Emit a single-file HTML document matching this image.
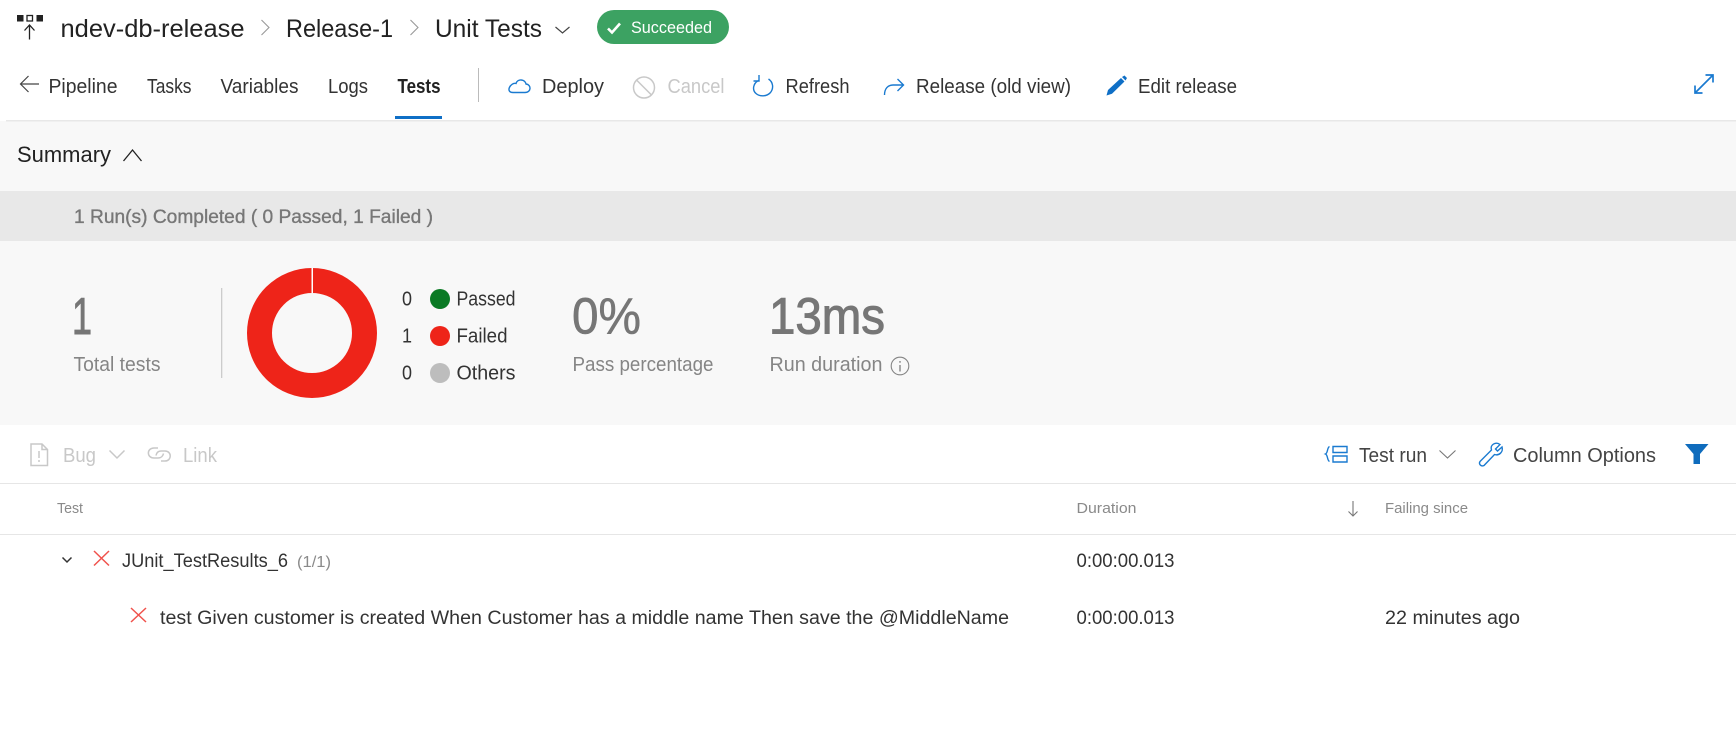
<!DOCTYPE html>
<html lang="en"><head><meta charset="utf-8"><title>Unit Tests</title>
<style>
html,body{margin:0;padding:0;background:#fff;width:1736px;height:734px;overflow:hidden}
svg{display:block}
text{font-family:"Liberation Sans",Arial,sans-serif;fill:#333}
.i{fill:none;stroke:#1a7ad0;stroke-width:1.4}
.g{fill:none;stroke:#c8c8c8;stroke-width:1.5}
.k{fill:none;stroke:#444;stroke-width:1.2}
</style></head><body>
<svg xmlns="http://www.w3.org/2000/svg" width="1736" height="734" viewBox="0 0 1736 734">
<rect width="1736" height="734" fill="#fff"/>
<!-- header -->
<g fill="#222"><rect x="17" y="15" width="6.500" height="6.500"/><rect x="36.500" y="15" width="6.500" height="6.500"/></g>
<rect x="27" y="15.500" width="5.500" height="5.500" fill="none" stroke="#222" stroke-width="1.300"/>
<path d="M29.500 26V39.500M24.500 30.500L29.500 25L34.500 30.500" fill="none" stroke="#222" stroke-width="1.300"/>
<g font-size="25">
<text x="60.500" y="37" textLength="184" lengthAdjust="spacingAndGlyphs" style="fill:#222">ndev-db-release</text>
<text x="286" y="37" textLength="107" lengthAdjust="spacingAndGlyphs" style="fill:#222">Release-1</text>
<text x="435" y="37" textLength="107" lengthAdjust="spacingAndGlyphs" style="fill:#222">Unit Tests</text>
</g>
<path d="M261.500 20L269 27.500L261.500 35M410.500 20L418 27.500L410.500 35" fill="none" stroke="#999" stroke-width="1.100"/>
<path d="M555.500 27L562.500 33L569.500 27" class="k"/>
<rect x="597" y="10" width="132" height="34" rx="17" fill="#3ca262"/>
<path d="M608 28.500L612 32.500L620 23.500" fill="none" stroke="#fff" stroke-width="2.600"/>
<text x="631" y="33" font-size="16.500" textLength="81" lengthAdjust="spacingAndGlyphs" style="fill:#fff">Succeeded</text>
<!-- nav -->
<path d="M39 84H21M28.500 76L20.500 84L28.500 92" fill="none" stroke="#444" stroke-width="1.200"/>
<g font-size="20">
<text x="48.500" y="93" textLength="69" lengthAdjust="spacingAndGlyphs">Pipeline</text>
<text x="147" y="93" textLength="44.500" lengthAdjust="spacingAndGlyphs">Tasks</text>
<text x="220.500" y="93" textLength="78" lengthAdjust="spacingAndGlyphs">Variables</text>
<text x="328" y="93" textLength="40" lengthAdjust="spacingAndGlyphs">Logs</text>
<text x="397.500" y="93" textLength="43" lengthAdjust="spacingAndGlyphs" font-weight="700" style="fill:#222">Tests</text>
<text x="542" y="93" textLength="62" lengthAdjust="spacingAndGlyphs">Deploy</text>
<text x="667.500" y="93" textLength="57" lengthAdjust="spacingAndGlyphs" style="fill:#c8c8c8">Cancel</text>
<text x="785.500" y="93" textLength="64" lengthAdjust="spacingAndGlyphs">Refresh</text>
<text x="916" y="93" textLength="155" lengthAdjust="spacingAndGlyphs">Release (old view)</text>
<text x="1138" y="93" textLength="99" lengthAdjust="spacingAndGlyphs">Edit release</text>
</g>
<rect x="395" y="116" width="47" height="3" fill="#0f6fc6"/>
<rect x="478" y="68" width="1" height="34" fill="#bbb"/>
<path class="i" d="M513 92.500H525C531.500 92.500 531.500 84.500 526 84C525 79 517.500 78.500 516 83.500C510.500 82 505 92.500 513 92.500Z"/>
<circle cx="644" cy="87.500" r="10.500" class="g"/><path class="g" d="M636.500 80L651.500 95"/>
<path class="i" d="M758.500 80.500C753 83.500 752 90 756 93.500C760 97 767 96.500 770.500 92.500C774 88 773 82 768.500 79M759 75V81H753.500"/>
<path class="i" d="M903 85H893C888 85 884.500 88.500 884.500 95M897.500 79L903.500 85L897.500 91"/>
<path d="M1106.500 95.500L1108 90L1121 78L1124.500 81.500L1112 93.800ZM1122 77L1124.500 75.500L1127 78L1125.500 80.500Z" fill="#0f6fc6"/>
<path d="M1695.500 92.500L1712.500 75.500M1705.500 75H1713V82.500M1695 85.500V93H1702.500" fill="none" stroke="#1a7ad0" stroke-width="1.700"/>
<!-- summary -->
<rect x="0" y="121" width="1736" height="304" fill="#f8f8f8"/>
<rect x="6" y="120" width="1730" height="1.500" fill="#e8e8e8"/>
<text x="17" y="162" font-size="22" textLength="94" lengthAdjust="spacingAndGlyphs" style="fill:#222">Summary</text>
<path d="M123.500 161L132.500 150L141.500 161" fill="none" stroke="#222" stroke-width="1.300"/>
<rect x="0" y="191" width="1736" height="50" fill="#e8e8e8"/>
<text x="74" y="223" font-size="19" textLength="359" lengthAdjust="spacingAndGlyphs" style="fill:#777;stroke:#777;stroke-width:.35">1 Run(s) Completed ( 0 Passed, 1 Failed )</text>
<text x="72" y="334" font-size="52" textLength="20" lengthAdjust="spacingAndGlyphs" style="fill:#767676;stroke:#767676;stroke-width:1">1</text>
<text x="73.500" y="371" font-size="20" textLength="87" lengthAdjust="spacingAndGlyphs" style="fill:#858585">Total tests</text>
<rect x="221" y="288" width="1.300" height="90" fill="#ccc"/>
<circle cx="312" cy="333" r="52.500" fill="none" stroke="#ee2419" stroke-width="25"/>
<rect x="311.500" y="268" width="1.500" height="25" fill="#fff"/>
<g font-size="20">
<text x="402" y="305.500" textLength="10" lengthAdjust="spacingAndGlyphs">0</text>
<text x="402" y="342.500" textLength="10" lengthAdjust="spacingAndGlyphs">1</text>
<text x="402" y="379.500" textLength="10" lengthAdjust="spacingAndGlyphs">0</text>
<text x="456.500" y="305.500" textLength="59" lengthAdjust="spacingAndGlyphs">Passed</text>
<text x="456.500" y="342.500" textLength="51" lengthAdjust="spacingAndGlyphs">Failed</text>
<text x="456.500" y="379.500" textLength="59" lengthAdjust="spacingAndGlyphs">Others</text>
</g>
<circle cx="440" cy="299" r="10" fill="#0a7a24"/>
<circle cx="440" cy="336" r="10" fill="#ee2419"/>
<circle cx="440" cy="373" r="10" fill="#bdbdbd"/>
<text x="572" y="333.500" font-size="51" textLength="69" lengthAdjust="spacingAndGlyphs" style="fill:#767676;stroke:#767676;stroke-width:.6">0%</text>
<text x="769" y="333.500" font-size="51" textLength="116" lengthAdjust="spacingAndGlyphs" style="fill:#767676;stroke:#767676;stroke-width:1">13ms</text>
<text x="572.500" y="371" font-size="20" textLength="141" lengthAdjust="spacingAndGlyphs" style="fill:#858585">Pass percentage</text>
<text x="769.500" y="371" font-size="20" textLength="113" lengthAdjust="spacingAndGlyphs" style="fill:#858585">Run duration</text>
<circle cx="900" cy="366" r="8.800" fill="none" stroke="#858585" stroke-width="1.100"/>
<path d="M900 365V371.500M900 361V362.800" stroke="#858585" stroke-width="1.400"/>
<!-- toolbar -->
<path class="g" d="M31 444H42L47.500 449.500V465.500H31ZM42 444V449.500H47.500"/>
<path d="M39 451V458M39 460V462" stroke="#c8c8c8" stroke-width="1.500"/>
<text x="63" y="462" font-size="20" textLength="33" lengthAdjust="spacingAndGlyphs" style="fill:#c8c8c8">Bug</text>
<path class="g" d="M109.500 450.500L117 458L124.500 450.500"/>
<path class="g" d="M158 448H154C146.500 448 146.500 458 154 458H158C161 458 163 456 163.500 453.500M161 461H165C172 461 172 451 165 451H161C158 451 156.500 453 156 455.500"/>
<text x="183" y="462" font-size="20" textLength="34" lengthAdjust="spacingAndGlyphs" style="fill:#c8c8c8">Link</text>
<path class="i" d="M1333 446.500H1347V452.500H1333ZM1333 456H1347V462H1333ZM1329.500 446.500C1327 447.500 1328 453 1325.500 454C1328 455 1327 460.500 1329.500 461.500"/>
<text x="1359" y="462" font-size="20" textLength="68" lengthAdjust="spacingAndGlyphs" style="fill:#444">Test run</text>
<path d="M1439.500 450.500L1447.500 458L1455.500 450.500" fill="none" stroke="#777" stroke-width="1.100"/>
<path class="i" d="M1480 461.500L1491.500 450C1489.500 444.500 1496 441.500 1500 444.500L1495.500 449L1497.500 451L1502 447C1503.500 452 1499 456 1494.500 454.500L1484 465.500C1481 467 1478.500 464 1480 461.500Z"/>
<text x="1513" y="462" font-size="20" textLength="143" lengthAdjust="spacingAndGlyphs" style="fill:#444">Column Options</text>
<path d="M1685 444H1708.500L1700 454V464H1693.500V454Z" fill="#0f6cbd"/>
<rect x="0" y="483" width="1736" height="1" fill="#e6e6e6"/>
<!-- table -->
<text x="57" y="513" font-size="15" textLength="26" lengthAdjust="spacingAndGlyphs" style="fill:#8a8a8a">Test</text>
<text x="1076.500" y="513" font-size="15" textLength="60" lengthAdjust="spacingAndGlyphs" style="fill:#8a8a8a">Duration</text>
<text x="1385" y="513" font-size="15" textLength="83" lengthAdjust="spacingAndGlyphs" style="fill:#8a8a8a">Failing since</text>
<path d="M1353 501V516M1348.500 511.500L1353 516L1357.500 511.500" fill="none" stroke="#777" stroke-width="1.100"/>
<rect x="0" y="534" width="1736" height="1" fill="#e6e6e6"/>
<path d="M62.500 557.500L67 562L71.500 557.500" fill="none" stroke="#333" stroke-width="1.500"/>
<path d="M94 551L109 565.500M109 551L94 565.500M131 608L146 622M146 608L131 622" fill="none" stroke="#f0524c" stroke-width="1.500"/>
<g font-size="19">
<text x="122" y="567" textLength="166" lengthAdjust="spacingAndGlyphs">JUnit_TestResults_6</text>
<text x="297" y="567" font-size="16" textLength="34" lengthAdjust="spacingAndGlyphs" style="fill:#8a8a8a">(1/1)</text>
<text x="160" y="624" textLength="849" lengthAdjust="spacingAndGlyphs">test Given customer is created When Customer has a middle name Then save the @MiddleName</text>
<text x="1076.500" y="567" textLength="98" lengthAdjust="spacingAndGlyphs">0:00:00.013</text>
<text x="1076.500" y="624" textLength="98" lengthAdjust="spacingAndGlyphs">0:00:00.013</text>
<text x="1385" y="624" textLength="135" lengthAdjust="spacingAndGlyphs">22 minutes ago</text>
</g>
</svg>
</body></html>
